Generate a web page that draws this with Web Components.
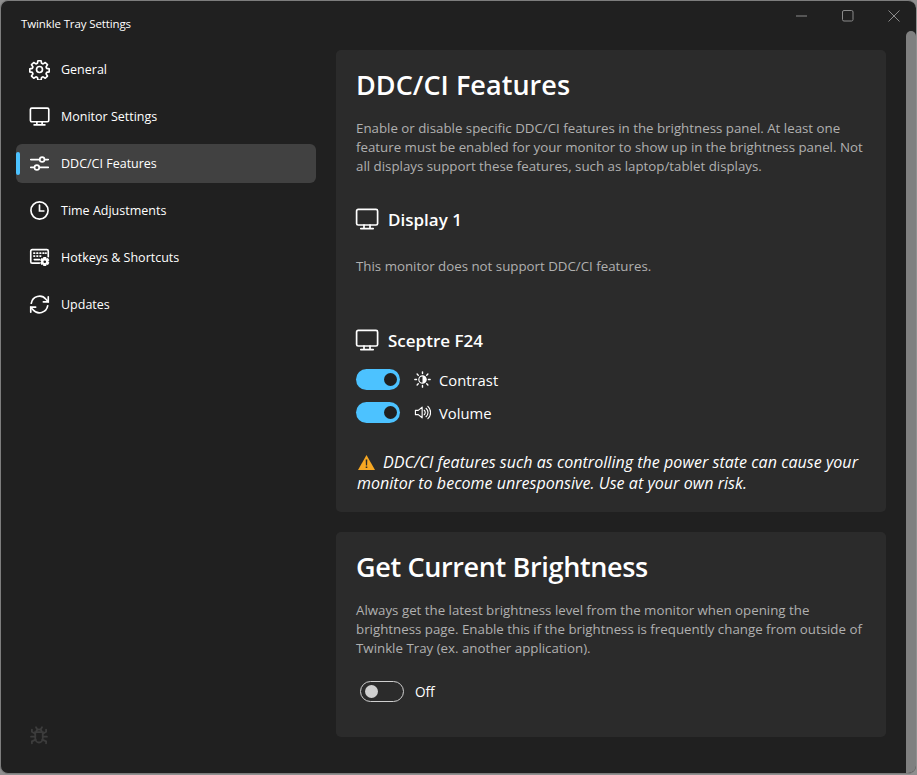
<!DOCTYPE html>
<html lang="en"><head><meta charset="utf-8"><title>Twinkle Tray Settings</title>
<style>
html,body{margin:0;height:100%;background:#8f8f8f;overflow:hidden}
body{font-family:"Open Sans","Noto Sans",sans-serif;color:#fff}
</style></head><body>
<tt-window>
  <tt-sidebar slot="sidebar" heading="Twinkle Tray Settings">
    <tt-nav icon="gear">General</tt-nav>
    <tt-nav icon="monitor">Monitor Settings</tt-nav>
    <tt-nav icon="sliders" active>DDC/CI Features</tt-nav>
    <tt-nav icon="clock">Time Adjustments</tt-nav>
    <tt-nav icon="keys">Hotkeys &amp; Shortcuts</tt-nav>
    <tt-nav icon="sync">Updates</tt-nav>
  </tt-sidebar>
  <tt-card heading="DDC/CI Features" style="height:462px;--ls:.05px">
    <tt-desc>Enable or disable specific DDC/CI features in the brightness panel. At least one<br>feature must be enabled for your monitor to show up in the brightness panel. Not<br>all displays support these features, such as laptop/tablet displays.</tt-desc>
    <tt-monitor name="Display 1" style="margin-top:31px">
      <tt-desc style="margin-top:26px">This monitor does not support DDC/CI features.</tt-desc>
    </tt-monitor>
    <tt-monitor name="Sceptre F24" style="margin-top:52px">
      <tt-feature icon="sun" style="margin-top:17px">Contrast</tt-feature>
      <tt-feature icon="volume" style="margin-top:12px">Volume</tt-feature>
    </tt-monitor>
    <tt-warning style="margin-top:29px">DDC/CI features such as controlling the power state can cause your<br>monitor to become unresponsive. Use at your own risk.</tt-warning>
  </tt-card>
  <tt-card heading="Get Current Brightness" style="height:205px;margin-top:20px;--ls:-.35px">
    <tt-desc>Always get the latest brightness level from the monitor when opening the<br>brightness page. Enable this if the brightness is frequently change from outside of<br>Twinkle Tray (ex. another application).</tt-desc>
    <tt-switch style="margin:23px 0 0 4px">Off</tt-switch>
  </tt-card>
</tt-window>
<script>
const ICONS={
 gear:'<path d="M10.2 2h3.6l.6 2.9 1.7.7 2.5-1.6 2.5 2.5-1.6 2.5.7 1.7 2.9.6v3.4l-2.9.6-.7 1.7 1.6 2.5-2.5 2.5-2.5-1.6-1.7.7-.6 2.9h-3.6l-.6-2.9-1.7-.7-2.5 1.6-2.5-2.5 1.6-2.5-.7-1.7-2.9-.6v-3.4l2.9-.6.7-1.7-1.6-2.5 2.5-2.5 2.5 1.6 1.7-.7z" stroke-linejoin="round"/><circle cx="12" cy="12" r="3.4"/>',
 monitor:'<rect x="1.6" y="2.4" width="21" height="15.6" rx="1.6"/><path d="M9 18v3.4M15 18v3.4M5.8 21.6h12.4"/>',
 sliders:'<path d="M2 7.5h10M18 7.5h4M2 16.5h4M12 16.5h10"/><circle cx="15" cy="7.5" r="2.7"/><circle cx="9" cy="16.5" r="2.7"/>',
 clock:'<circle cx="12" cy="12" r="9.8"/><path d="M12 5.8V12.6H17"/>',
 keys:'<path d="M12 18.4H3.6A1.6 1.6 0 0 1 2 16.8V4.6A1.6 1.6 0 0 1 3.6 3h16.8A1.6 1.6 0 0 1 22 4.6V11"/><path d="M5.5 7h1M9 7h1M12.5 7h1M16 7h1M19 7h.6M5.5 10.4h1M9 10.4h1M12.5 10.4h1M6 14.4h6" stroke-width="1.8"/><path fill="currentColor" stroke="none" fill-rule="evenodd" d="M16.4 11.4h3.2l.4 1.8 1.7-.6 1.6 2.6-1.3 1.3 1.3 1.4-1.6 2.6-1.7-.6-.4 1.8h-3.2l-.4-1.8-1.7.6-1.6-2.6 1.3-1.4-1.3-1.3 1.6-2.6 1.7.6zM18 15.4a1.5 1.5 0 1 0 0 3 1.5 1.5 0 0 0 0-3z"/>',
 sync:'<path d="M2.6 10.6A9.6 9.6 0 0 1 19.4 6L22 8.8M21.4 13.4A9.6 9.6 0 0 1 4.6 18L2 15.2"/><path d="M22 3.2v5.8h-5.6M2 20.8v-5.8h5.6"/>',
 bug:'<path d="M7.5 8.5h9v7a4.5 5.5 0 0 1-9 0z"/><path d="M8.8 8.5a3.2 3.2 0 0 1 6.4 0M8.4 2.8l1.6 2.6M15.6 2.8 14 5.4M7.5 10.5 3.5 8.2V5.5M16.5 10.5l4-2.3V5.5M7.5 14H2.5M16.5 14h5M8 17.5l-4.5 2.2V22M16 17.5l4.5 2.2V22"/>',
 sun:'<circle cx="12" cy="12" r="5.2"/><path fill="currentColor" stroke="none" d="M12 6.8a5.2 5.2 0 0 1 0 10.4z"/><path d="M12 1.2v2.4M12 20.4v2.4M1.2 12h2.4M20.4 12h2.4M4.4 4.4 6 6M18 18l1.6 1.6M4.4 19.6 6 18M18 6l1.6-1.6" stroke-width="2"/>',
 volume:'<path d="M2 9h4l5.5-4.5v15L6 15H2z" stroke-linejoin="round"/><path d="M14.5 8.8a4.5 4.5 0 0 1 0 6.4M17 6a8 8 0 0 1 0 12M19.6 3.4a11.6 11.6 0 0 1 0 17.2"/>'
};
const icon=(n,s,w=1.6)=>`<svg viewBox="0 0 24 24" width="${s}" height="${s}" fill="none" stroke="currentColor" stroke-width="${w}" stroke-linecap="round" aria-hidden="true">${ICONS[n]}</svg>`;
function def(tag,build){customElements.define(tag,class extends HTMLElement{connectedCallback(){if(!this.shadowRoot){this.attachShadow({mode:'open'}).innerHTML=build(this);}}});}

def('tt-window',()=>`<style>
:host{display:block;box-sizing:border-box;width:916px;height:774px;background:#202020;border:1px solid #7d7d7d;border-right:0;border-radius:8px;margin:0;overflow:hidden;position:relative}
.wrap{display:flex;height:100%}
.main{width:550px;margin-left:9px;padding-top:49px;display:flex;flex-direction:column}
.bar{width:10px;margin:30px 0 0 20px;background:#808080;border-radius:5px 5px 0 0}
.caption{position:absolute;top:9px;right:16px;display:flex;gap:34px;align-items:center;color:#8a8a8a}
svg{display:block}
</style><div class="wrap"><slot name="sidebar"></slot><div class="main"><slot></slot></div><div class="bar"></div></div>
<div class="caption">
<svg width="12" height="12" viewBox="0 0 12 12" fill="none" stroke="currentColor"><path d="M0 6h11"/></svg>
<svg width="12" height="12" viewBox="0 0 12 12" fill="none" stroke="currentColor"><rect x=".5" y=".5" width="10.5" height="10.5" rx="1.5"/></svg>
<svg width="12" height="12" viewBox="0 0 12 12" fill="none" stroke="currentColor"><path d="M.5.5l11 11M11.5.5l-11 11"/></svg>
</div>`);

def('tt-sidebar',h=>`<style>
:host{display:flex;flex-direction:column;width:326px;flex:none;box-sizing:border-box;padding:0 9px 0 15px}
.t{font-size:11.5px;line-height:16px;margin:15px 0 0 5px;height:16px;letter-spacing:-.12px;color:#fff}
.list{display:flex;flex-direction:column;gap:8px;margin-top:18px}
.bug{margin:auto 0 26px 13px;color:#3c3c3c;height:22px}
svg{display:block}
</style><div class="t">${h.getAttribute('heading')}</div><div class="list"><slot></slot></div><div class="bug">${icon('bug',20,2.2)}</div>`);

def('tt-nav',h=>`<style>
:host{display:flex;align-items:center;height:39px;width:300px;border-radius:6px;position:relative;font-size:12.5px;color:#fff}
:host([active]){background:#414141}
.ind{position:absolute;left:0;top:8px;width:4px;height:23px;border-radius:2px;background:#4cc2ff}
.i{width:21px;height:21px;margin:0 11px 0 13px;flex:none}
svg{display:block}
</style>${h.hasAttribute('active')?'<span class="ind"></span>':''}<span class="i">${icon(h.getAttribute('icon'),21,1.9)}</span><slot></slot>`);

def('tt-card',h=>`<style>
:host{display:block;box-sizing:border-box;width:550px;background:#2b2b2b;border-radius:5px;padding:17px 20px 0;flex:none}
h2{margin:0 0 16px;font-size:27px;line-height:36px;font-weight:600;letter-spacing:var(--ls,0);color:#fff}
</style><h2>${h.getAttribute('heading')}</h2><slot></slot>`);

def('tt-desc',()=>`<style>
:host{display:block;font-size:13.3px;line-height:19px;color:#b0b0b0}
</style><slot></slot>`);

def('tt-monitor',h=>`<style>
:host{display:block}
.h{display:flex;align-items:center;gap:9px;height:24px;font-size:17px;font-weight:600;color:#fff}
svg{display:block;margin-left:-1px}
</style><div class="h">${icon('monitor',24,1.7)}<span>${h.getAttribute('name')}</span></div><slot></slot>`);

def('tt-feature',h=>`<style>
:host{display:flex;align-items:center;height:21px;font-size:14.8px;color:#fff}
.sw{width:44px;height:21px;border-radius:11px;background:#4cc2ff;position:relative;flex:none;margin-right:14px}
.sw::after{content:"";position:absolute;right:3px;top:4px;width:13px;height:13px;border-radius:50%;background:#202020}
.i{width:17px;height:17px;margin-right:8px}
svg{display:block}
</style><span class="sw"></span><span class="i">${icon(h.getAttribute('icon'),17,1.6)}</span><slot></slot>`);

def('tt-warning',()=>`<style>
:host{display:block;font-style:italic;font-size:16px;line-height:21px;color:#fff;letter-spacing:.04px;padding-left:1px}
svg{display:inline-block;vertical-align:-2px;margin:0 8px 0 1px}
</style><svg width="17" height="15" viewBox="0 0 17 15"><path d="M8.5 0 17 15H0z" fill="#f7a823"/><path d="M7.7 4.5h1.6l-.2 6H7.9zM7.7 11.4h1.6v1.6H7.7z" fill="#2b2b2b"/></svg><slot></slot>`);

def('tt-switch',()=>`<style>
:host{display:flex;align-items:center;height:21px;font-size:13.6px;color:#fff}
.sw{box-sizing:border-box;width:44px;height:21px;border-radius:11px;border:1px solid #cfcfcf;position:relative;margin-right:11px}
.sw::after{content:"";position:absolute;left:4px;top:3px;width:13px;height:13px;border-radius:50%;background:#cfcfcf}
</style><span class="sw"></span><slot></slot>`);
</script>
</body></html>
